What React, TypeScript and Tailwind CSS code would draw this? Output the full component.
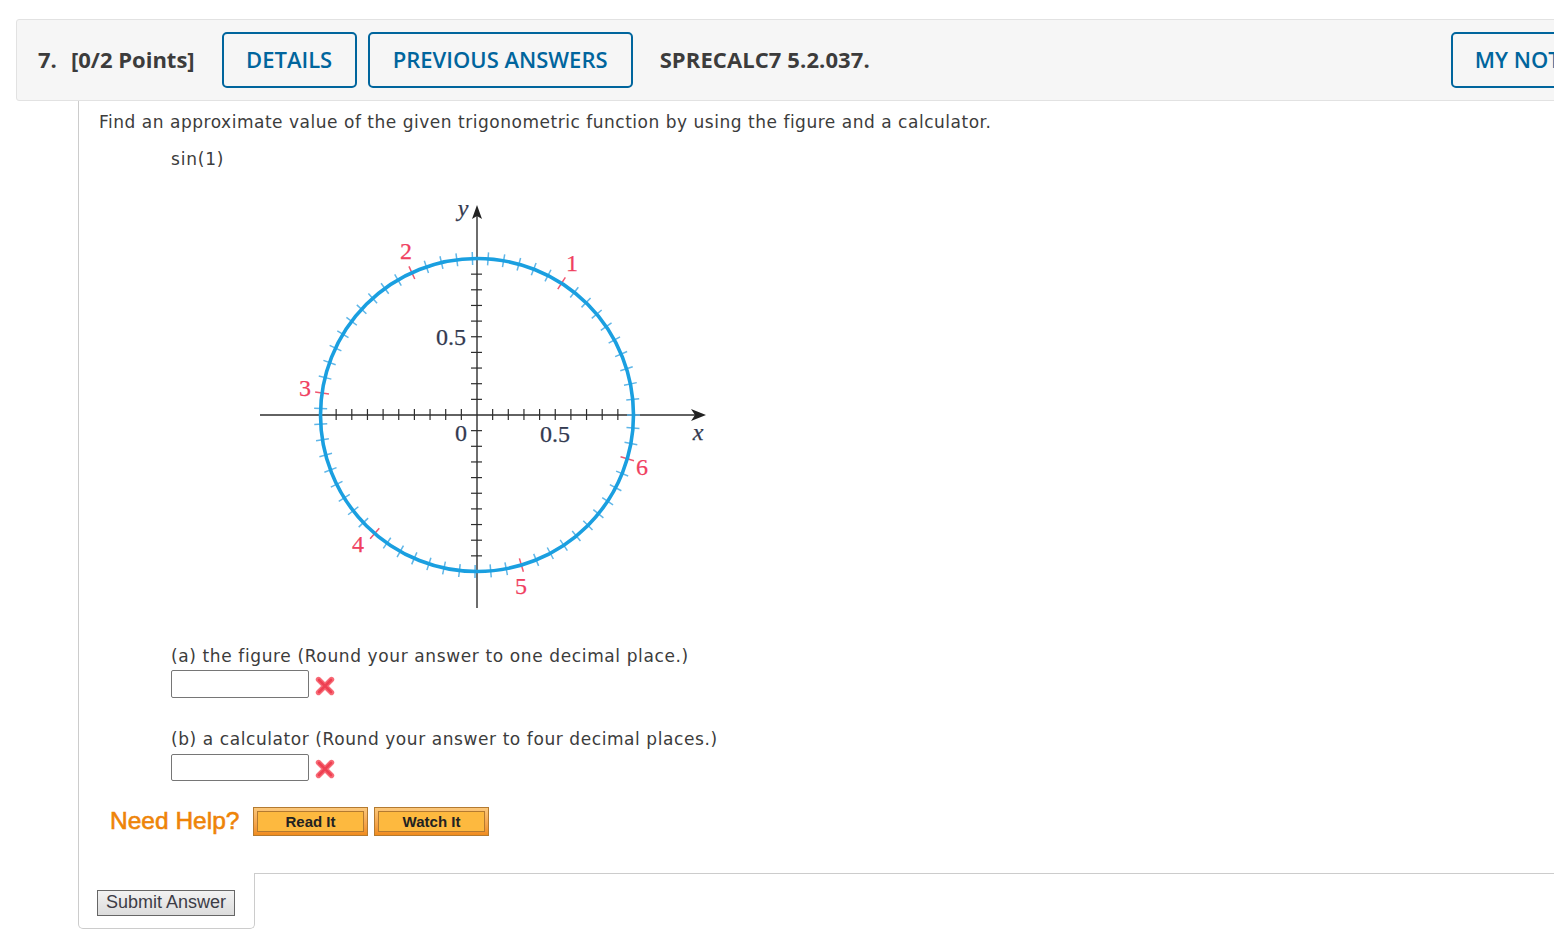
const CX = 477;
const CY = 415;
const R = 156.5;
const UNIT = 15.65;

function UnitCircle() {
  const circleTicks = [];
  for (let k = 0; k < 63; k++) {
    const a = k / 10;
    const major = k % 10 === 0 && k > 0;
    const len = major ? 7 : 6.5;
    circleTicks.push(
      <line
        key={k}
        x1={CX + (R - len) * Math.cos(a)}
        y1={CY - (R - len) * Math.sin(a)}
        x2={CX + (R + len) * Math.cos(a)}
        y2={CY - (R + len) * Math.sin(a)}
        stroke={major ? '#f0566f' : '#5fb6e8'}
        strokeWidth={1.5}
      />
    );
  }
  const axisTicks = [];
  for (let k = -9; k <= 9; k++) {
    if (k === 0) continue;
    axisTicks.push(<line key={`x${k}`} x1={CX + k * UNIT} y1={CY - 6} x2={CX + k * UNIT} y2={CY + 5} stroke="#2e2e2e" strokeWidth={1.2} />);
    axisTicks.push(<line key={`y${k}`} x1={CX - 6} y1={CY + k * UNIT} x2={CX + 5} y2={CY + k * UNIT} stroke="#2e2e2e" strokeWidth={1.2} />);
  }
  const serif = { fontFamily: '"Liberation Serif", serif' };
  return (
    <svg width="460" height="420" viewBox="250 195 460 420" className="block">
      <line x1="260" y1={CY} x2="695" y2={CY} stroke="#2e2e2e" strokeWidth="1.4" />
      <line x1={CX} y1="215" x2={CX} y2="608" stroke="#2e2e2e" strokeWidth="1.4" />
      <path d="M706 415 L691 409 L695 415 L691 421 Z" fill="#222" />
      <path d="M477 205 L472 219 L477 216 L482 219 Z" fill="#222" />
      {axisTicks}
      {circleTicks}
      <circle cx={CX} cy={CY} r={R} fill="none" stroke="#1a9fe0" strokeWidth="3.6" />
      <g style={serif} fontSize="24" fill="#333a50" textAnchor="middle" stroke="#333a50" strokeWidth="0.25">
        <text x="451" y="345">0.5</text>
        <text x="461" y="441">0</text>
        <text x="555" y="442">0.5</text>
        <text x="698" y="440" fontStyle="italic">x</text>
        <text x="463" y="216" fontStyle="italic">y</text>
      </g>
      <g style={serif} fontSize="24" fill="#f0405f" textAnchor="middle" stroke="#f0405f" strokeWidth="0.25">
        <text x="572" y="271">1</text>
        <text x="406" y="259">2</text>
        <text x="305" y="396">3</text>
        <text x="358" y="552">4</text>
        <text x="521" y="594">5</text>
        <text x="642" y="475">6</text>
      </g>
    </svg>
  );
}

function WrongMark({ className = '' }: { className?: string }) {
  return (
    <svg width="20" height="20" viewBox="0 0 20 20" className={`ml-[6px] ${className}`}>
      <path d="M3.5 3.5 L16.5 16.5 M16.5 3.5 L3.5 16.5" stroke="#f76a76" strokeWidth="5.4" strokeLinecap="round" />
      <path d="M4 4 L16 16 M16 4 L4 16" stroke="#ee4052" strokeWidth="2.6" strokeLinecap="round" />
    </svg>
  );
}

function HelpButton({ label }: { label: string }) {
  return (
    <div className="w-[115px] h-[29px] border border-[#b47a30] bg-gradient-to-b from-[#fbc77a] to-[#f08c1c] p-[3px]">
      <div className="h-full pt-[2px] border border-[#b47a30] bg-[#fdb93f] flex items-center justify-center text-[15px] font-bold text-[#222] font-['Liberation_Sans',sans-serif]">
        {label}
      </div>
    </div>
  );
}

function HeaderButton({ label, className = '' }: { label: string; className?: string }) {
  return (
    <div className={`h-14 pb-[2px] flex items-center justify-center rounded-[5px] border-2 border-[#00659d] text-[22px] font-semibold text-[#00659d] whitespace-nowrap ${className}`}>
      {label}
    </div>
  );
}

export default function App() {
  return (
    <div className="w-[1554px] h-[939px] overflow-hidden bg-white pt-[19px] pl-4 text-[#3c3c3c] font-['DejaVu_Sans',sans-serif]">
      <div className="w-[1600px] h-[82px] flex items-center pl-[21px] border border-[#e2e2e2] rounded-[3px] bg-[#f6f6f6] font-['Open_Sans',sans-serif]">
        <span className="w-[33px] pb-[2px] text-[22px] font-bold">7.</span>
        <span className="pb-[2px] text-[22px] font-bold whitespace-nowrap">[0/2 Points]</span>
        <HeaderButton label="DETAILS" className="ml-[27px] w-[135px]" />
        <HeaderButton label="PREVIOUS ANSWERS" className="ml-[11px] w-[265px]" />
        <span className="ml-[27px] pb-[2px] text-[22px] font-bold tracking-[0.1px] whitespace-nowrap">SPRECALC7 5.2.037.</span>
        <HeaderButton label="MY NOTES" className="ml-[581px] w-[158px]" />
      </div>
      <div className="ml-[62px] border-l border-[#cccccc] pt-[10px] pl-5 h-[772px]">
        <p className="text-[17px] leading-[22px] tracking-[0.52px] whitespace-nowrap">
          Find an approximate value of the given trigonometric function by using the figure and a calculator.
        </p>
        <div className="pl-[72px]">
          <p className="mt-[15px] text-[17px] leading-[22px] tracking-[0.8px]">sin(1)</p>
          <div className="mt-[25px]">
            <div className="ml-[79px] w-fit">
              <UnitCircle />
            </div>
          </div>
          <p className="mt-[30px] text-[17px] leading-[22px] tracking-[0.62px] whitespace-nowrap">
            (a) the figure (Round your answer to one decimal place.)
          </p>
          <div className="mt-[3px] flex">
            <div className="w-[138px] h-[28px] border border-[#767676] rounded-[2px] bg-white" />
            <WrongMark className="mt-[6px]" />
          </div>
          <p className="mt-[30px] text-[17px] leading-[22px] tracking-[0.58px] whitespace-nowrap">
            (b) a calculator (Round your answer to four decimal places.)
          </p>
          <div className="mt-[4px] flex">
            <div className="w-[138px] h-[27px] border border-[#767676] rounded-[2px] bg-white" />
            <WrongMark className="mt-[5px]" />
          </div>
        </div>
        <div className="mt-[25px] ml-[11px] flex items-center">
          <span className="w-[143px] pb-[2px] text-[24.5px] leading-[29px] font-['Liberation_Sans',sans-serif] text-[#ee8408] [-webkit-text-stroke:0.6px_#ee8408]">
            Need Help?
          </span>
          <HelpButton label="Read It" />
          <div className="w-[6px]" />
          <HelpButton label="Watch It" />
        </div>
      </div>
      <div className="ml-[62px] flex">
        <div className="w-[177px] h-[56px] border-x border-b border-[#cccccc] rounded-b-[5px] pl-[18px] pt-[17px]">
          <div className="w-[138px] h-[26px] pb-[2px] border border-[#666666] bg-gradient-to-b from-[#f2f2f2] to-[#dcdcdc] flex items-center justify-center text-[18px] text-[#3c3c46] font-['Liberation_Sans',sans-serif] whitespace-nowrap">
            Submit Answer
          </div>
        </div>
        <div className="flex-1 border-t border-[#cccccc]" />
      </div>
    </div>
  );
}
